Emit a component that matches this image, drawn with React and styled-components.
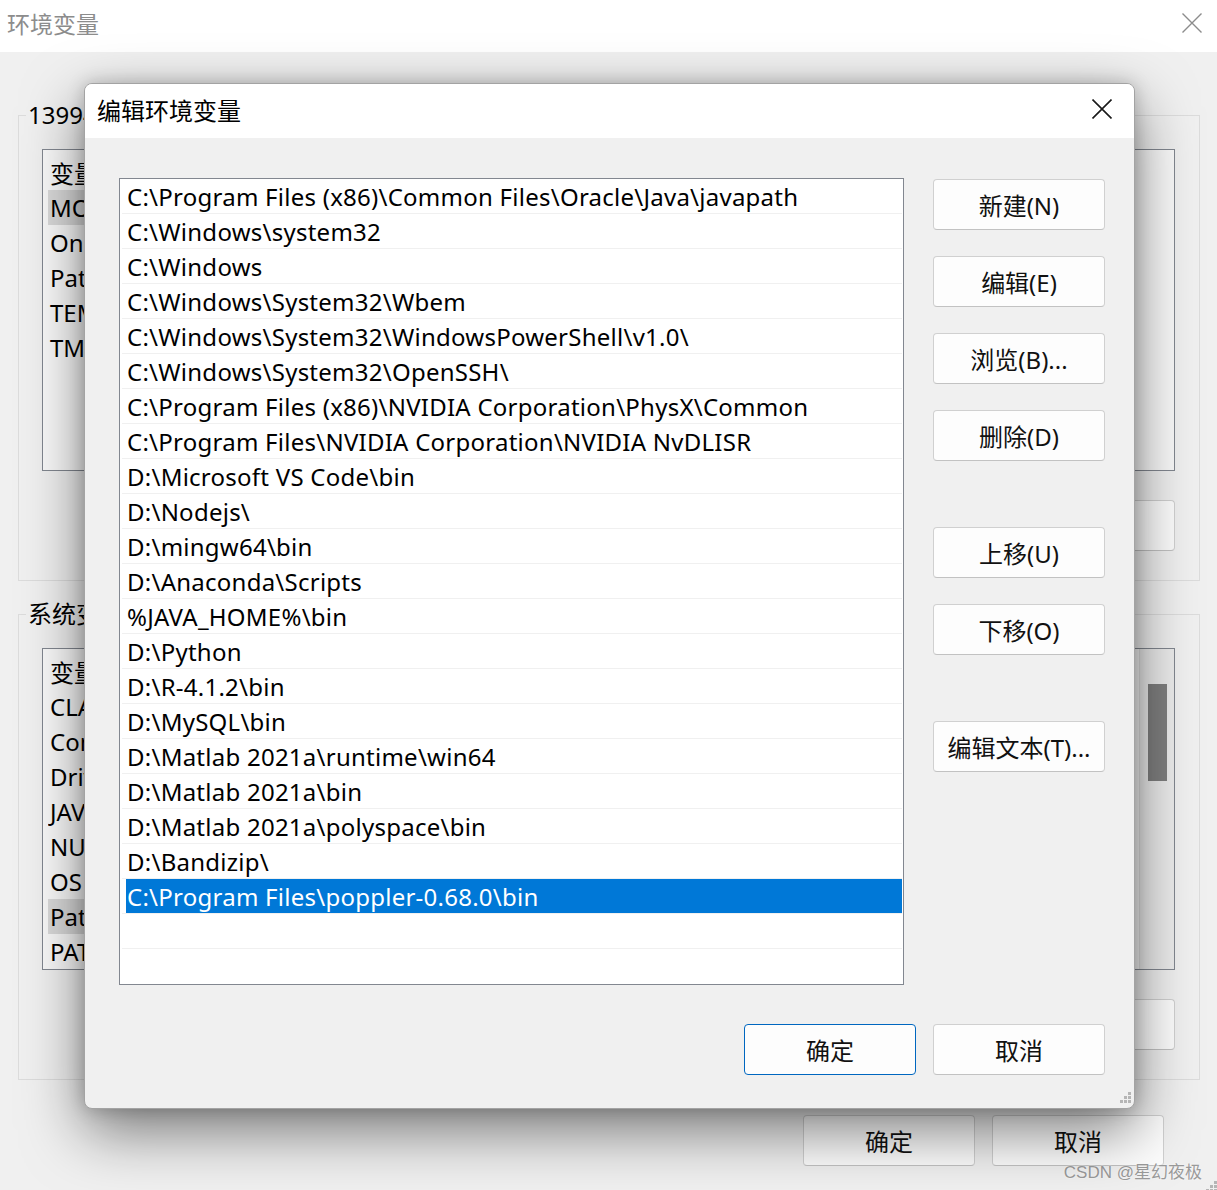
import React from 'react';
import styled, { createGlobalStyle } from 'styled-components';

const GlobalStyle = createGlobalStyle`
  html, body {
    margin: 0;
    padding: 0;
    background: #f0f0f0;
    overflow: hidden;
  }
  body {
    font-family: "Noto Sans", "Noto Sans CJK SC", sans-serif;
    color: #000;
  }
  * { box-sizing: border-box; }
`;

const FONT = `"Noto Sans", "Noto Sans CJK SC", sans-serif`;

const Window = styled.div`
    position: relative;
    width: 1217px;
    height: 1190px;
    overflow: hidden;
    background: #f0f0f0;
    display: flex;
    flex-direction: column;
`;

const TitleBar = styled.div`
    flex: none;
    height: 52px;
    background: #fff;
    display: flex;
    align-items: center;
    justify-content: space-between;
    padding: 0 15px 6px 7px;
`;

const WindowTitle = styled.div`
    font-size: 23px;
    color: #8c8c8c;
    font-family: ${FONT};
`;

const WindowBody = styled.div`
    flex: 1;
    display: flex;
    flex-direction: column;
    padding: 48px 17px 0 18px;
`;

const Group = styled.fieldset`
    margin: ${(p) => (p.$first ? '0' : '18px 0 0')};
    padding: 19px 24px 29px 23px;
    border: 1px solid #dcdcdc;
    min-width: 0;
`;

const Legend = styled.legend`
    margin-left: -16px;
    padding: 0 2px;
    font-size: 24px;
    line-height: 30px;
    font-family: ${FONT};
`;

const VarList = styled.div`
    height: 322px;
    border: 1px solid #828790;
    background: #fafafa;
    display: flex;
    overflow: hidden;
`;

const VarRows = styled.div`
    flex: 1;
    min-width: 0;
`;

const VarRow = styled.div`
    display: flex;
    height: ${(p) => (p.$header ? '40px' : '35px')};
    padding-top: ${(p) => (p.$header ? '4px' : '0')};
    margin-left: 5px;
    align-items: stretch;
    font-size: 24px;
    white-space: nowrap;
`;

const VarName = styled.div`
    width: 300px;
    padding-left: 2px;
    display: flex;
    align-items: center;
    overflow: hidden;
    background: ${(p) => (p.$active ? '#dadada' : 'transparent')};
`;

const ScrollTrack = styled.div`
    width: 35px;
    flex: none;
    background: #ececec;
    border-left: 1px solid #e2e2e2;
    padding: 35px 0 0 8px;
`;

const ScrollThumb = styled.div`
    width: 19px;
    height: 97px;
    background: #7f7f7f;
`;

const ButtonRow = styled.div`
    display: flex;
    justify-content: flex-end;
    gap: 17px;
    margin-top: ${(p) => p.$top || 29}px;
    margin-right: ${(p) => p.$right || 0}px;
`;

const Button = styled.button`
    width: 172px;
    height: 51px;
    flex: none;
    padding: 0;
    background: #fdfdfd;
    border: 1px solid ${(p) => (p.$primary ? '#0067c0' : '#d0d0d0')};
    border-bottom-color: ${(p) => (p.$primary ? '#0067c0' : '#c2c2c2')};
    border-radius: 4px;
    font-family: ${FONT};
    font-size: 24px;
    color: #111;
    margin-top: ${(p) => (p.$spaced ? '40px' : '0')};
`;

const Dialog = styled.div`
    position: absolute;
    left: 84px;
    top: 83px;
    width: 1051px;
    height: 1026px;
    border: 1px solid #a3a3a3;
    border-radius: 8px;
    overflow: hidden;
    background: #f0f0f0;
    display: flex;
    flex-direction: column;
    box-shadow: 0 22px 60px rgba(0, 0, 0, 0.5), 0 0 18px rgba(0, 0, 0, 0.2);
`;

const DialogTitleBar = styled.div`
    flex: none;
    height: 54px;
    background: #fff;
    display: flex;
    align-items: center;
    justify-content: space-between;
    padding: 0 22px 4px 12px;
`;

const DialogTitle = styled.div`
    font-size: 24px;
    font-family: ${FONT};
`;

const DialogBody = styled.div`
    flex: 1;
    display: flex;
    flex-direction: column;
    padding: 40px 29px 0 34px;
`;

const Main = styled.div`
    display: flex;
    gap: 29px;
`;

const PathList = styled.div`
    width: 785px;
    height: 807px;
    border: 1px solid #828790;
    background: #fff;
    padding: 0 1px;
    overflow: hidden;
`;

const PathRow = styled.div`
    height: 35px;
    border-bottom: 1px solid #f0f0f0;
    margin-left: 1px;
`;

const PathLabel = styled.div`
    height: 34px;
    margin-left: 4px;
    padding: 1px 0 0 1px;
    line-height: 34px;
    font-size: 24px;
    letter-spacing: 0.25px;
    white-space: nowrap;
    background: ${(p) => (p.$selected ? '#0078d7' : 'transparent')};
    color: ${(p) => (p.$selected ? '#fff' : '#000')};
`;

const SideColumn = styled.div`
    display: flex;
    flex-direction: column;
    gap: 26px;
    padding-top: 1px;
`;

const Grip = styled.svg`
    position: absolute;
    right: ${(p) => p.$right}px;
    bottom: ${(p) => p.$bottom}px;
`;

const Watermark = styled.div`
    position: absolute;
    right: 15px;
    bottom: 7px;
    font-family: "Liberation Sans", "Noto Sans CJK SC", sans-serif;
    font-size: 17px;
    color: #9a9a9a;
    text-shadow: 0 0 2px #fff;
`;

const CloseIcon = ({ color, width }) => (
    <svg width="20" height="20" viewBox="0 0 20 20">
        <path d="M0.5 0.5 L19.5 19.5 M19.5 0.5 L0.5 19.5" stroke={color} strokeWidth={width} fill="none" />
    </svg>
);

const GripDots = ({ right, bottom }) => (
    <Grip $right={right} $bottom={bottom} width="14" height="14" viewBox="0 0 14 14">
        {[[11, 1], [7, 5], [11, 5], [3, 9], [7, 9], [11, 9]].map(([x, y]) => (
            <rect key={`${x}-${y}`} x={x} y={y} width="3" height="3" fill="#b5b5b5" />
        ))}
    </Grip>
);

const userVars = [
    ['MOZ_PLUGIN_PATH', true],
    ['OneDrive'],
    ['Path'],
    ['TEMP'],
    ['TMP'],
];

const systemVars = [
    ['CLASSPATH'],
    ['ComSpec'],
    ['DriverData'],
    ['JAVA_HOME'],
    ['NUMBER_OF_PROCESSORS'],
    ['OS'],
    ['Path', true],
    ['PATHEXT'],
];

const paths = [
    'C:\\Program Files (x86)\\Common Files\\Oracle\\Java\\javapath',
    'C:\\Windows\\system32',
    'C:\\Windows',
    'C:\\Windows\\System32\\Wbem',
    'C:\\Windows\\System32\\WindowsPowerShell\\v1.0\\',
    'C:\\Windows\\System32\\OpenSSH\\',
    'C:\\Program Files (x86)\\NVIDIA Corporation\\PhysX\\Common',
    'C:\\Program Files\\NVIDIA Corporation\\NVIDIA NvDLISR',
    'D:\\Microsoft VS Code\\bin',
    'D:\\Nodejs\\',
    'D:\\mingw64\\bin',
    'D:\\Anaconda\\Scripts',
    '%JAVA_HOME%\\bin',
    'D:\\Python',
    'D:\\R-4.1.2\\bin',
    'D:\\MySQL\\bin',
    'D:\\Matlab 2021a\\runtime\\win64',
    'D:\\Matlab 2021a\\bin',
    'D:\\Matlab 2021a\\polyspace\\bin',
    'D:\\Bandizip\\',
    'C:\\Program Files\\poppler-0.68.0\\bin',
    '',
];

const sideButtons = [
    ['新建(N)', false],
    ['编辑(E)', false],
    ['浏览(B)...', false],
    ['删除(D)', false],
    ['上移(U)', true],
    ['下移(O)', false],
    ['编辑文本(T)...', true],
];

const VarTable = ({ rows, scroll }) => (
    <VarList>
        <VarRows>
            <VarRow $header>
                <VarName>变量</VarName>
            </VarRow>
            {rows.map(([name, active]) => (
                <VarRow key={name}>
                    <VarName $active={active}>{name}</VarName>
                </VarRow>
            ))}
        </VarRows>
        {scroll && (
            <ScrollTrack>
                <ScrollThumb />
            </ScrollTrack>
        )}
    </VarList>
);

export default function App() {
    return (
        <Window>
            <GlobalStyle />
            <TitleBar>
                <WindowTitle>环境变量</WindowTitle>
                <CloseIcon color="#8c8c8c" width={1.4} />
            </TitleBar>
            <WindowBody>
                <Group $first>
                    <Legend>13994 的用户变量(U)</Legend>
                    <VarTable rows={userVars} />
                    <ButtonRow>
                        <Button>新建(N)...</Button>
                        <Button>编辑(E)...</Button>
                        <Button>删除(D)</Button>
                    </ButtonRow>
                </Group>
                <Group>
                    <Legend>系统变量(S)</Legend>
                    <VarTable rows={systemVars} scroll />
                    <ButtonRow>
                        <Button>新建(W)...</Button>
                        <Button>编辑(I)...</Button>
                        <Button>删除(L)</Button>
                    </ButtonRow>
                </Group>
                <ButtonRow $top={35} $right={36}>
                    <Button>确定</Button>
                    <Button>取消</Button>
                </ButtonRow>
            </WindowBody>
            <GripDots right={0} bottom={-4} />
            <Watermark>CSDN @星幻夜极</Watermark>

            <Dialog>
                <DialogTitleBar>
                    <DialogTitle>编辑环境变量</DialogTitle>
                    <CloseIcon color="#1a1a1a" width={1.6} />
                </DialogTitleBar>
                <DialogBody>
                    <Main>
                        <PathList>
                            {paths.map((p, i) => (
                                <PathRow key={i}>
                                    <PathLabel $selected={i === 20}>{p}</PathLabel>
                                </PathRow>
                            ))}
                        </PathList>
                        <SideColumn>
                            {sideButtons.map(([label, spaced]) => (
                                <Button key={label} $spaced={spaced}>{label}</Button>
                            ))}
                        </SideColumn>
                    </Main>
                    <ButtonRow $top={39}>
                        <Button $primary>确定</Button>
                        <Button>取消</Button>
                    </ButtonRow>
                </DialogBody>
                <GripDots right={3} bottom={3} />
            </Dialog>
        </Window>
    );
}
